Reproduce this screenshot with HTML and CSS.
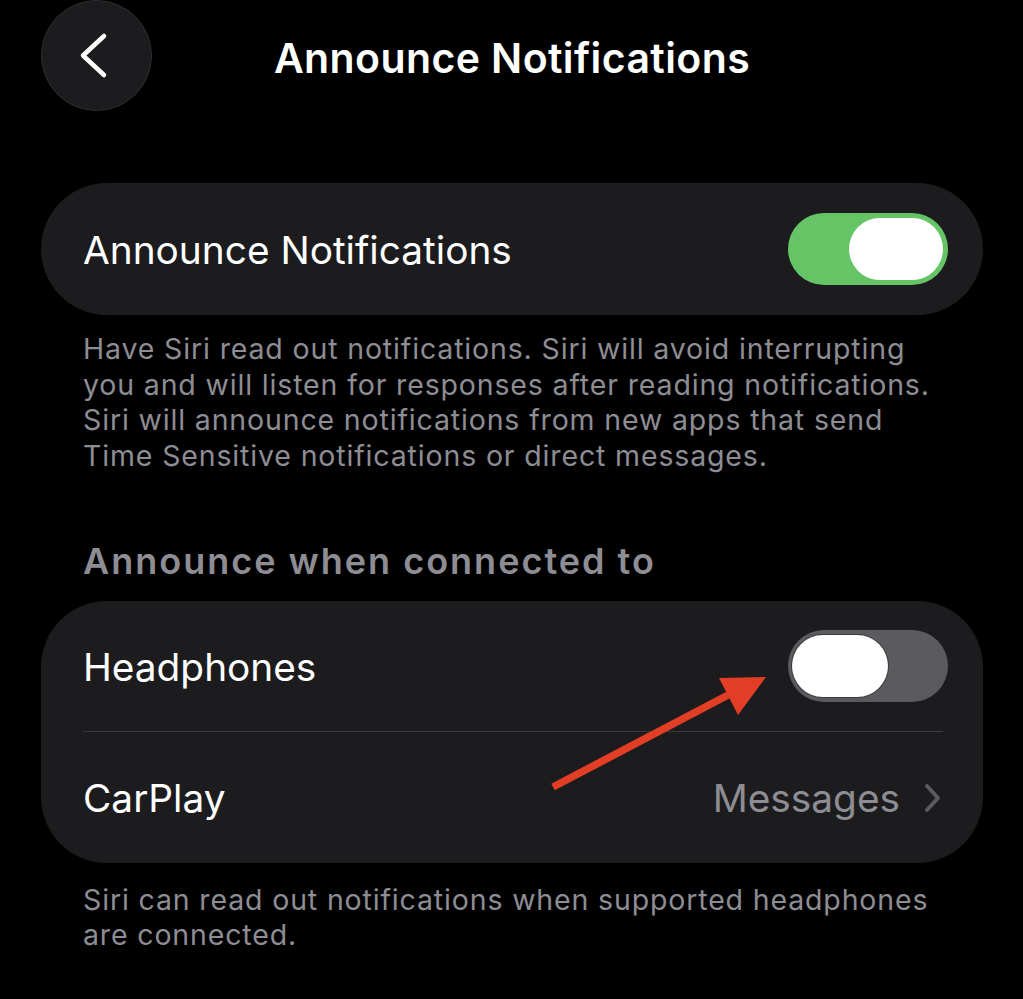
FILE: index.html
```html
<!DOCTYPE html>
<html lang="en">
<head>
    <meta charset="UTF-8">
    <meta name="viewport" content="width=device-width, initial-scale=1.0">
    <title>Announce Notifications</title>
    <link rel="stylesheet" href="styles.css">
</head>
<body>
    <div id="screen">
        <!-- top bar -->
        <header class="nav">
            <button class="back-button" aria-label="Back">
                <svg width="40" height="50" viewBox="0 0 40 50">
                    <path d="M28 5 L7 24.5 L28 44" fill="none" stroke="#fff" stroke-width="4.5" stroke-linecap="round" stroke-linejoin="round"/>
                </svg>
            </button>
            <h1>Announce Notifications</h1>
            <span></span>
        </header>

        <!-- main switch -->
        <section class="group group-first">
            <div class="card">
                <div class="row row-single">
                    <span class="label">Announce Notifications</span>
                    <span class="switch on"><span class="knob"></span></span>
                </div>
            </div>
            <p class="note">Have Siri read out notifications. Siri will avoid interrupting<br>you and will listen for responses after reading notifications.<br>Siri will announce notifications from new apps that send<br>Time Sensitive notifications or direct messages.</p>
        </section>

        <!-- devices -->
        <section class="group">
            <h2 class="group-title">Announce when connected to</h2>
            <div class="card">
                <div class="row">
                    <span class="label">Headphones</span>
                    <span class="switch"><span class="knob"></span></span>
                </div>
                <div class="separator"></div>
                <div class="row row-last">
                    <span class="label">CarPlay</span>
                    <span class="detail">
                        Messages
                        <svg width="20" height="30" viewBox="0 0 20 30">
                            <path d="M4 3 L15 15 L4 27" fill="none" stroke="#5b5b60" stroke-width="4" stroke-linecap="round" stroke-linejoin="round"/>
                        </svg>
                    </span>
                </div>
            </div>
            <p class="note">Siri can read out notifications when supported headphones<br>are connected.</p>
        </section>

        <!-- red pointer drawn over the list -->
        <svg class="pointer" width="1023" height="999" viewBox="0 0 1023 999">
            <line x1="553" y1="787" x2="730" y2="694" stroke="#e23d25" stroke-width="7.5"/>
            <polygon points="719,678 766,677 738,715" fill="#e23d25"/>
        </svg>
    </div>
</body>
</html>
```

FILE: styles.css
```css
body {
    background-color: #000;
    font-family: Inter, "Noto Sans", sans-serif;
    color: #fff;
    margin: 0;
    padding: 0;
}
#screen {
    position: relative;
    width: 1023px;
    height: 999px;
    overflow: hidden;
    padding: 0 40px 0 41px;
    box-sizing: border-box;
}
.nav {
    display: grid;
    grid-template-columns: 111px 1fr 111px;
    align-items: center;
    height: 111px;
}
.back-button {
    width: 111px;
    height: 111px;
    border-radius: 50%;
    background-color: #1c1c1e;
    border: 1.5px solid #2e2e31;
    display: flex;
    align-items: center;
    justify-content: center;
    padding: 0 2px 0 0;
    cursor: pointer;
}
.nav h1 {
    margin: 0;
    text-align: center;
    font-size: 41px;
    font-weight: 600;
    letter-spacing: 0.4px;
    padding-top: 4px;
}
.group-first {
    margin-top: 72px;
}
.card {
    background-color: #1c1c1e;
    border-radius: 66px;
    padding: 0 35px 0 42px;
}
.row {
    display: flex;
    align-items: center;
    justify-content: space-between;
    height: 130px;
}
.row-single {
    height: 132px;
}
.row-last {
    height: 131px;
}
.label {
    font-size: 38.8px;
}
.separator {
    height: 1px;
    background-color: #3a3a3c;
    margin-right: 5px;
}
.switch {
    position: relative;
    width: 160px;
    height: 72px;
    border-radius: 36px;
    background-color: #5b5b5f;
}
.switch.on {
    background-color: #65c466;
}
.knob {
    position: absolute;
    top: 5px;
    left: 4px;
    width: 96px;
    height: 62px;
    border-radius: 31px;
    background-color: #fff;
    box-shadow: 0 0 0 1px rgba(0, 0, 0, 0.35);
}
.switch.on .knob {
    left: auto;
    right: 5px;
    width: 94px;
    box-shadow: none;
}
.detail {
    display: flex;
    align-items: center;
    gap: 23px;
    font-size: 38.8px;
    color: #8d8d93;
    padding-right: 5px;
}
.note {
    margin: 16px 0 0 42px;
    font-size: 28.5px;
    letter-spacing: 0.85px;
    line-height: 35.5px;
    color: #8d8d93;
    white-space: nowrap;
}
.group-title {
    margin: 66px 0 18px 42px;
    font-size: 36px;
    font-weight: 600;
    letter-spacing: 2px;
    line-height: 44px;
    color: #8d8d93;
}
.group-title + .card + .note {
    margin-top: 19px;
    line-height: 35px;
}
.pointer {
    position: absolute;
    top: 0;
    left: 0;
    pointer-events: none;
}
```
